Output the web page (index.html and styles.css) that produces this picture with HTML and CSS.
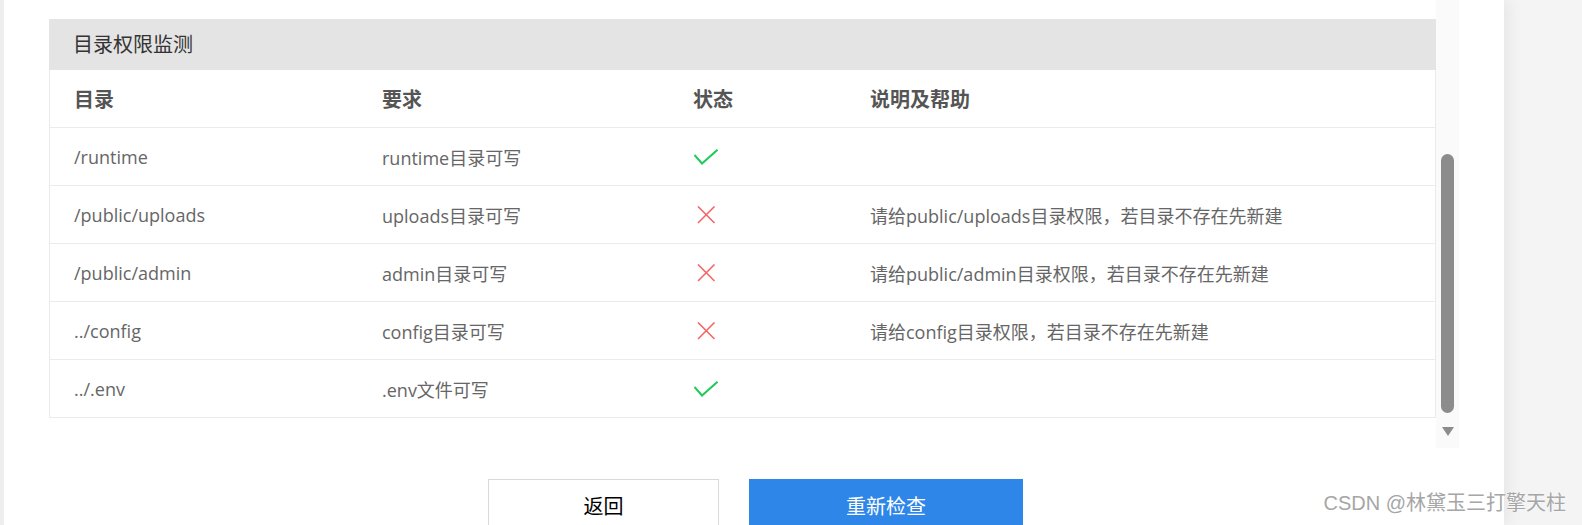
FILE: index.html
```html
<!DOCTYPE html>
<html lang="zh-CN">
<head>
<meta charset="UTF-8" />
<title>目录权限监测</title>
<link rel="stylesheet" href="styles.css">
</head>
<body>

<div class="page">
  <div class="panel">
    <div class="panel-main">
      <div class="panel-title">目录权限监测</div>
      <div class="check-table">
        <div class="row head">
          <div>目录</div><div>要求</div><div>状态</div><div>说明及帮助</div>
        </div>
        <div class="row">
          <div>/runtime</div><div>runtime目录可写</div>
          <div><svg class="ok" width="24" height="16" viewBox="0 0 24 16"><polyline points="0.5,6 8,14.5 23.5,0.8" /></svg></div>
          <div></div>
        </div>
        <div class="row">
          <div>/public/uploads</div><div>uploads目录可写</div>
          <div><svg class="no" width="24" height="18" viewBox="0 0 24 18"><path d="M4 0.5 L20.5 17 M20.5 0.5 L4 17" /></svg></div>
          <div>请给public/uploads目录权限，若目录不存在先新建</div>
        </div>
        <div class="row">
          <div>/public/admin</div><div>admin目录可写</div>
          <div><svg class="no" width="24" height="18" viewBox="0 0 24 18"><path d="M4 0.5 L20.5 17 M20.5 0.5 L4 17" /></svg></div>
          <div>请给public/admin目录权限，若目录不存在先新建</div>
        </div>
        <div class="row">
          <div>../config</div><div>config目录可写</div>
          <div><svg class="no" width="24" height="18" viewBox="0 0 24 18"><path d="M4 0.5 L20.5 17 M20.5 0.5 L4 17" /></svg></div>
          <div>请给config目录权限，若目录不存在先新建</div>
        </div>
        <div class="row">
          <div>../.env</div><div>.env文件可写</div>
          <div><svg class="ok" width="24" height="16" viewBox="0 0 24 16"><polyline points="0.5,6 8,14.5 23.5,0.8" /></svg></div>
          <div></div>
        </div>
      </div>
    </div>
    <div class="scroll-track">
      <div class="thumb"></div>
      <div class="arrow"></div>
    </div>
  </div>

  <div class="actions">
    <button class="btn-back">返回</button>
    <button class="btn-recheck">重新检查</button>
  </div>
</div>

<div class="watermark">CSDN @林黛玉三打擎天柱</div>

</body>
</html>
```

FILE: styles.css
```css
html, body { margin: 0; height: 525px; overflow: hidden; }
body { background: #f4f4f4; font-family: "Microsoft YaHei", "Open Sans", "Noto Sans CJK SC", sans-serif; }
.page { margin-left: 4px; width: 1500px; height: 525px; background: #fff; box-shadow: -4px 0 0 #eee, 6px 0 14px rgba(0,0,0,0.05); overflow: hidden; }

.panel { display: flex; margin-left: 45px; height: 448px; }
.panel-main { width: 1387px; padding-top: 19px; }
.panel-title { height: 51px; line-height: 51px; background: #e4e4e4; padding-left: 24px; font-size: 20px; color: #333; }

.check-table { border: 1px solid #ebebeb; border-top: none; }
.row { display: grid; grid-template-columns: 308px 311px 177px 1fr; align-items: center; height: 58px; box-sizing: border-box; border-bottom: 1px solid #ebebeb; font-size: 18px; color: #666; }
.row:last-child { border-bottom: none; height: 57px; }
.row > div { padding-left: 24px; white-space: nowrap; }
.row.head { font-size: 20px; font-weight: bold; color: #555; }
.row svg { display: block; margin-left: 1px; }
.ok polyline { fill: none; stroke: #22c95b; stroke-width: 2; }
.no path { fill: none; stroke: #f56666; stroke-width: 1.6; }

.scroll-track { width: 23px; background: #fafafa; display: flex; flex-direction: column; align-items: center; }
.thumb { margin-top: 154px; width: 13px; height: 259px; border-radius: 7px; background: #8c8c8c; }
.arrow { margin-top: 14px; width: 0; height: 0; border-left: 6.5px solid transparent; border-right: 6.5px solid transparent; border-top: 9px solid #8c8c8c; }

.actions { display: flex; gap: 30px; padding-left: 484px; margin-top: 31px; }
.actions button { height: 52px; font-size: 20px; font-family: "Noto Sans CJK SC", sans-serif; cursor: pointer; }
.btn-back { width: 231px; background: #fff; border: 1px solid #d9d9d9; color: #000; }
.btn-recheck { width: 274px; background: #2e86e8; border: none; color: #fff; }

.watermark { position: absolute; top: 487px; right: 16px; font-size: 20px; color: #a6a6a6; font-family: "Liberation Sans", "Noto Sans CJK SC", sans-serif; text-shadow: 0 0 2px #fff; }
```
